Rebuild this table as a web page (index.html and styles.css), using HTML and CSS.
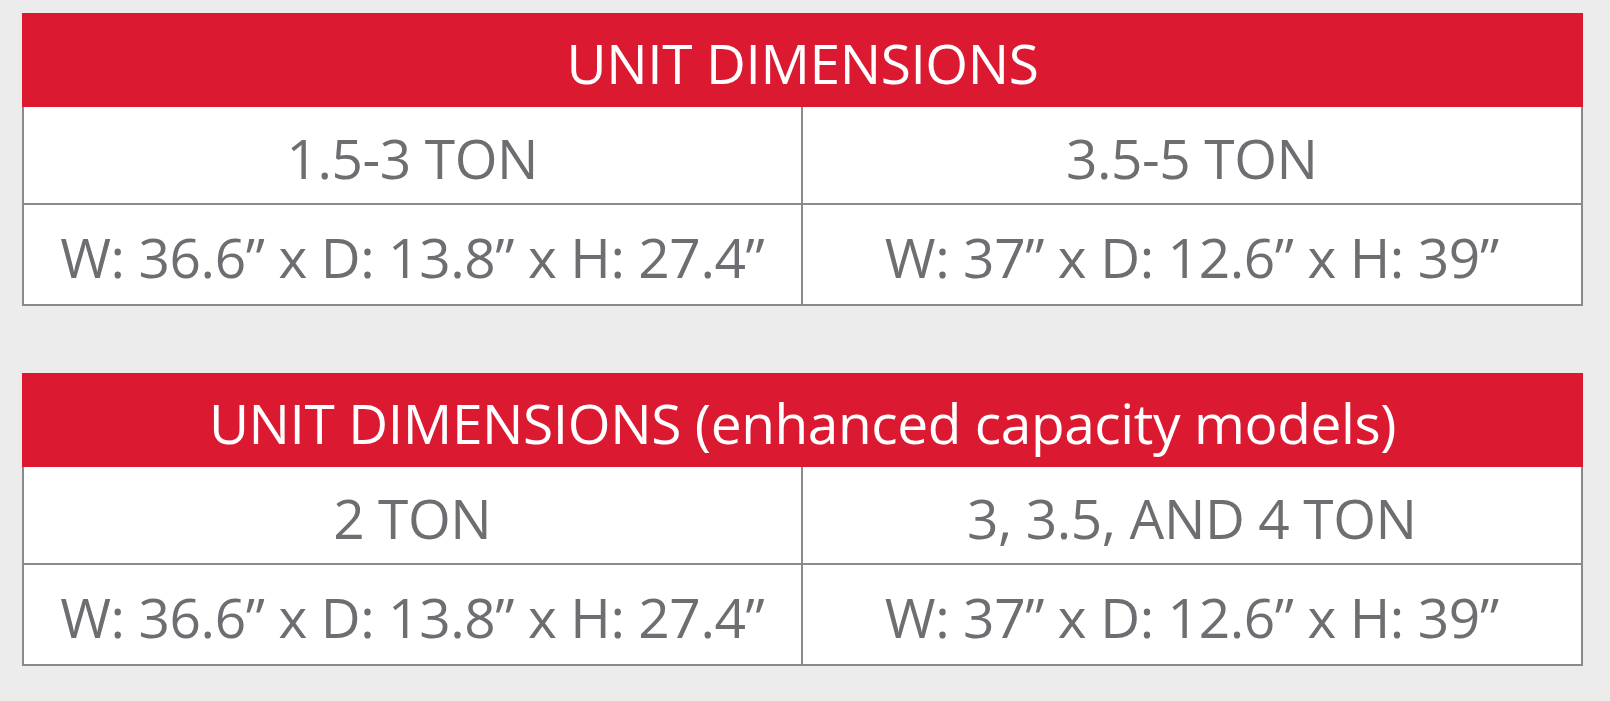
FILE: index.html
```html
<!DOCTYPE html>
<html>
<head>
<meta charset="utf-8">
<link rel="stylesheet" href="styles.css">
</head>
<body>
<div class="page">
  <div class="dim-table">
    <div class="dim-head">UNIT DIMENSIONS</div>
    <div class="dim-grid">
      <div class="cell size">1.5-3 TON</div>
      <div class="cell size">3.5-5 TON</div>
      <div class="cell meas">W: 36.6” x D: 13.8” x H: 27.4”</div>
      <div class="cell meas">W: 37” x D: 12.6” x H: 39”</div>
    </div>
  </div>
  <div class="dim-table">
    <div class="dim-head">UNIT DIMENSIONS (enhanced capacity models)</div>
    <div class="dim-grid">
      <div class="cell size">2 TON</div>
      <div class="cell size">3, 3.5, AND 4 TON</div>
      <div class="cell meas">W: 36.6” x D: 13.8” x H: 27.4”</div>
      <div class="cell meas">W: 37” x D: 12.6” x H: 39”</div>
    </div>
  </div>
</div>
</body>
</html>
```
FILE: styles.css
```css
html, body {
  margin: 0;
  padding: 0;
  background: #ececec;
}
.page {
  width: 1561px;
  padding: 13px 0 0 22px;
  display: flex;
  flex-direction: column;
  gap: 67px;
  font-family: "Open Sans", "Noto Sans", sans-serif;
}
.dim-table {
  display: flex;
  flex-direction: column;
}
.dim-head {
  height: 94px;
  background: #db1a32;
  color: #ffffff;
  font-size: 55px;
  display: flex;
  align-items: center;
  justify-content: center;
  padding-top: 4px;
  box-sizing: border-box;
  letter-spacing: -0.4px;
}
.dim-grid {
  display: grid;
  grid-template-columns: 1fr 1fr;
  border-left: 2px solid #8a8a8a;
  border-right: 2px solid #8a8a8a;
  background: #ffffff;
}
.cell {
  display: flex;
  align-items: center;
  justify-content: center;
  color: #6d6e71;
  font-size: 55px;
  letter-spacing: -0.4px;
  border-bottom: 2px solid #8a8a8a;
  box-sizing: border-box;
  padding-top: 4px;
}
.cell.size {
  height: 98px;
}
.cell.meas {
  height: 101px;
}
.cell:nth-child(odd) {
  border-right: 2px solid #8a8a8a;
}
```
